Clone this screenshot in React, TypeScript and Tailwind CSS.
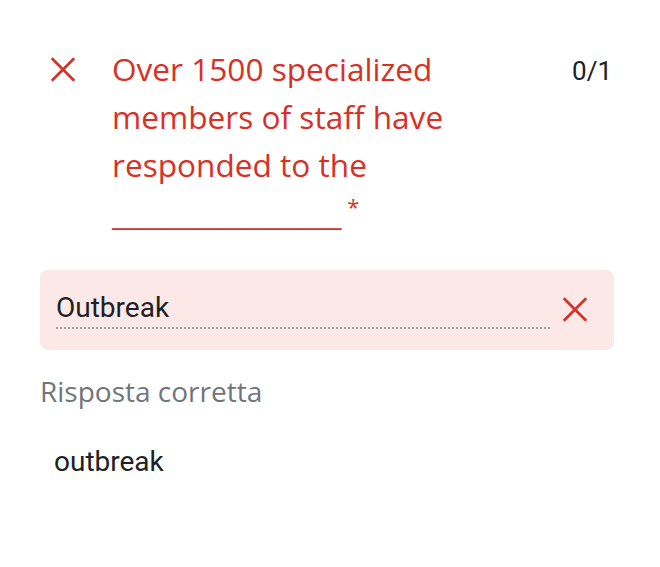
import React from 'react';

const CrossIcon = ({ className = '' }: { className?: string }) => (
  <svg viewBox="0 0 24 24" className={className} fill="none" stroke="currentColor" strokeWidth="2.3" strokeLinecap="butt">
    <path d="M2 2 L22 22 M22 2 L2 22" />
  </svg>
);

export default function App() {
  return (
    <div className="w-[660px] h-[567px] bg-white pl-10 pt-[45px]" style={{ fontFamily: 'Roboto, "Liberation Sans", sans-serif' }}>
      <div className="w-[580px] flex items-start">
        <div className="w-[72px] shrink-0 pt-[11px] pl-[8px] text-[#d93025]">
          <CrossIcon className="w-[30px] h-[27px]" />
        </div>
        <div className="flex-1 text-[#d93025] text-[31.6px] leading-[48px]" style={{ fontFamily: '"Open Sans", Roboto, sans-serif' }}>
          <div className="h-[48px]">Over 1500 specialized</div>
          <div className="h-[48px]">members of staff have</div>
          <div className="h-[48px]">responded to the</div>
          <div className="h-[48px]">
            <span className="tracking-[-0.35px]">_________________</span>
            <span className="ml-[6px] text-[22px] leading-none align-[10px]">*</span>
          </div>
        </div>
        <div className="pt-[8px] text-[26px] leading-[36px] text-[#202124] pr-[8px]">0/1</div>
      </div>

      <div className="mt-[33px] w-[574px] h-[80px] rounded-lg bg-[#fce8e6] flex items-start pl-4 pr-[25px] pt-[22px]">
        <div className="flex-1 border-b-2 border-dotted border-[#9aa0a6] pb-[3px] text-[28px] leading-[32px] text-[#202124]">
          Outbreak
        </div>
        <div className="ml-[11px] mt-[4px] text-[#d93025]">
          <CrossIcon className="w-[28px] h-[27px]" />
        </div>
      </div>

      <div className="mt-[23px] text-[28px] leading-[36px] text-[#70757a]" style={{ fontFamily: '"Open Sans", Roboto, sans-serif' }}>
        Risposta corretta
      </div>
      <div className="mt-[37px] pl-[14px] text-[28px] leading-[32px] text-[#202124]">outbreak</div>
    </div>
  );
}
